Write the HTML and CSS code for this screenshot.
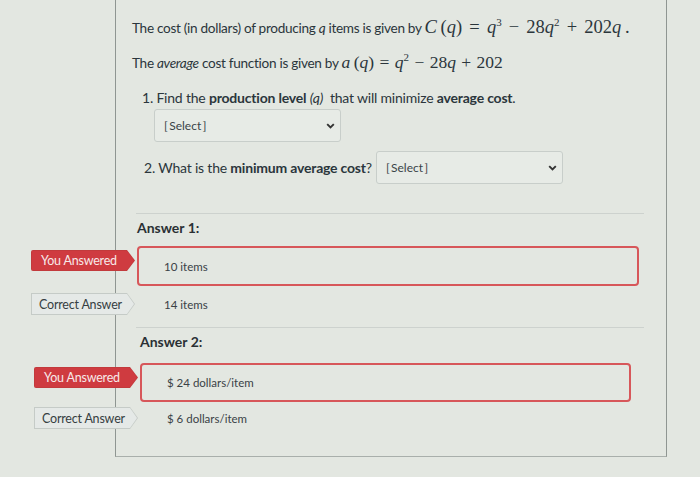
FILE: index.html
```html
<!DOCTYPE html>
<html>
<head>
<meta charset="utf-8">
<link rel="stylesheet" href="styles.css">
</head>
<body>
<div class="page">
  <div class="quiz">
    <div class="question">
      <p class="stem">The cost (in dollars) of producing <i>q</i> items is given by <span class="math m1"><i>C</i>&thinsp;(<i>q</i>) = <i>q</i><sup>3</sup> − 28<i>q</i><sup>2</sup> + 202<i>q</i>&thinsp;.</span></p>
      <p class="stem second">The <i>average</i> cost function is given by <span class="math"><i>a</i>&thinsp;(<i>q</i>) = <i>q</i><sup>2</sup> − 28<i>q</i> + 202</span></p>
      <p class="part">1. Find the <b>production level</b> <i>(q)</i> &nbsp;that will minimize <b>average cost</b>.</p>
      <div class="select first"><span>[&thinsp;Select&thinsp;]</span><svg width="9" height="6" viewBox="0 0 9 6"><path d="M1.2 1.2 L4.5 4.5 L7.8 1.2" fill="none" stroke="#333" stroke-width="1.9"/></svg></div>
      <div class="part-row">
        <span class="part2">2. What is the <b>minimum average cost</b>?</span>
        <div class="select"><span>[&thinsp;Select&thinsp;]</span><svg width="9" height="6" viewBox="0 0 9 6"><path d="M1.2 1.2 L4.5 4.5 L7.8 1.2" fill="none" stroke="#333" stroke-width="1.9"/></svg></div>
      </div>
    </div>
    <div class="sep"></div>
    <div class="answers">
      <div class="heading">Answer 1:</div>
      <div class="row wrong">
        <div class="tag red"><span>You Answered</span></div>
        <div class="box">10 items</div>
      </div>
      <div class="row correct">
        <div class="tag grey"><span>Correct Answer</span></div>
        <div class="plain">14 items</div>
      </div>
    </div>
    <div class="sep sep2"></div>
    <div class="answers a2">
      <div class="heading">Answer 2:</div>
      <div class="row wrong">
        <div class="tag red"><span>You Answered</span></div>
        <div class="box">$ 24 dollars/item</div>
      </div>
      <div class="row correct">
        <div class="tag grey"><span>Correct Answer</span></div>
        <div class="plain">$ 6 dollars/item</div>
      </div>
    </div>
  </div>
</div>
</body>
</html>
```

FILE: styles.css
```css
html, body {
  margin: 0;
  padding: 0;
}
body {
  background: #e3e7e1;
  font-family: Lato, "Open Sans", sans-serif;
  color: #2b363c;
  width: 700px;
  height: 477px;
  overflow: hidden;
}
.page {
  padding-left: 115px;
}
.quiz {
  width: 550px;
  border-left: 1px solid #8f9692;
  border-right: 1px solid #8f9692;
  border-bottom: 1px solid #a9afab;
  padding-bottom: 27px;
}
.question {
  padding: 17px 16px 0 16px;
}
p {
  margin: 0;
}
.stem {
  font-size: 13.6px;
  line-height: 22px;
  letter-spacing: -0.3px;
}
.stem.second {
  margin-top: 13px;
}
.math {
  font-family: "Liberation Serif", "DejaVu Serif", serif;
  font-size: 17.5px;
  line-height: 16px;
  letter-spacing: 0;
  word-spacing: 1px;
}
.math.m1 {
  font-size: 18.5px;
  word-spacing: 2.5px;
}
.math sup {
  font-size: 11px;
  line-height: 0;
}
.part {
  margin: 14px 0 0 10px;
  font-size: 14px;
  line-height: 20px;
  letter-spacing: -0.2px;
}
.part b, .part2 b {
  font-weight: 700;
}
.select {
  box-sizing: border-box;
  width: 187px;
  height: 33px;
  border: 1px solid #c8ceca;
  border-radius: 3px;
  background: #e7ebe6;
  display: flex;
  align-items: center;
  justify-content: space-between;
  padding: 0 5px 0 9px;
  font-size: 12px;
  color: #3a4448;
}
.select.first {
  margin: 1px 0 0 22px;
}
.part-row {
  display: flex;
  align-items: center;
  margin: 9px 0 0 12px;
  gap: 4px;
}
.part2 {
  font-size: 14px;
  letter-spacing: -0.2px;
}
.sep {
  height: 1px;
  background: #cdd2ce;
  margin: 29px 22px 0 20px;
}
.sep.sep2 {
  margin-top: 12px;
}
.answers {
  padding-left: 21px;
}
.answers.a2 {
  padding-left: 24px;
}
.heading {
  margin-top: 4px;
  font-size: 14px;
  font-weight: 700;
  line-height: 20px;
  color: #2a3034;
}
.row {
  display: flex;
  align-items: center;
  margin-left: -106px;
}
.row.wrong {
  align-items: flex-start;
  margin-top: 8px;
}
.row.wrong .tag {
  margin-top: 4px;
}
.answers.a2 .row.wrong {
  margin-top: 11px;
}
.row.correct {
  margin-top: 7px;
}
.answers.a2 .row.correct {
  margin-top: 5px;
}
.tag {
  box-sizing: border-box;
  width: 104px;
  height: 21px;
  padding: 1px;
  clip-path: polygon(0 0, 96px 0, 104px 50%, 96px 100%, 0 100%);
  flex: none;
  margin-right: 2px;
}
.tag span {
  display: flex;
  align-items: center;
  height: 100%;
  padding-left: 9px;
  font-size: 12.5px;
  letter-spacing: -0.2px;
  clip-path: polygon(0 0, 95px 0, 102px 50%, 95px 100%, 0 100%);
}
.tag.red {
  background: #c23a3c;
  border-radius: 2px 0 0 2px;
}
.tag.red span {
  background: #cf3b40;
  color: #f7e9e9;
}
.tag.grey {
  background: #c5cbc7;
  height: 22px;
}
.tag.grey span {
  background: #e5e9e7;
  color: #363e42;
  padding-left: 7px;
}
.box {
  box-sizing: border-box;
  width: 502px;
  height: 40px;
  border: 2px solid #d7575a;
  border-radius: 4px;
  display: flex;
  align-items: center;
  padding-left: 25px;
  font-size: 11.5px;
  color: #3a4246;
}
.answers.a2 .box {
  width: 491px;
  height: 39px;
}
.plain {
  padding-left: 27px;
  font-size: 11.5px;
  color: #3a4246;
}
```
